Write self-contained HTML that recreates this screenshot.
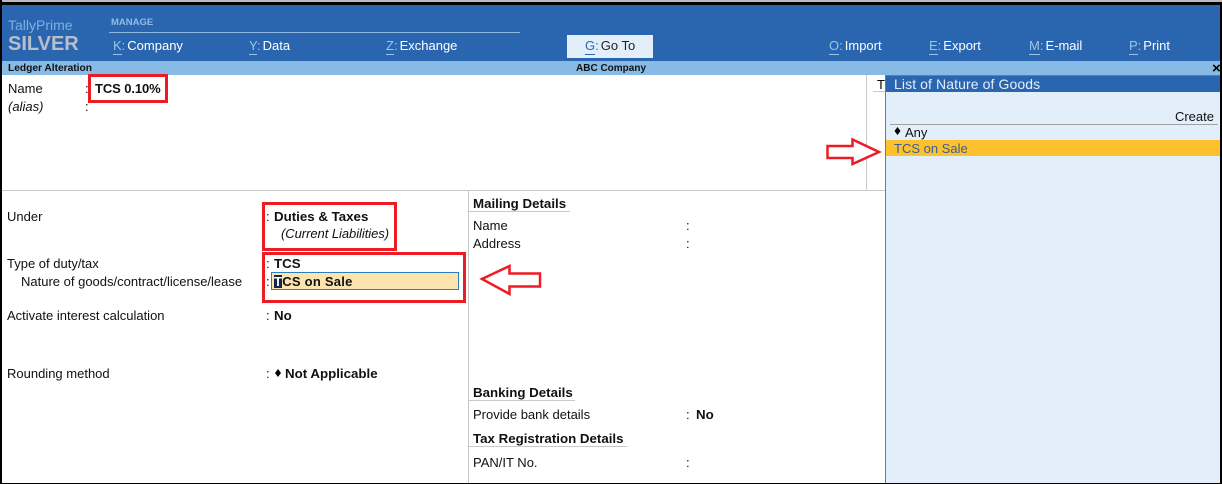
<!DOCTYPE html>
<html>
<head>
<meta charset="utf-8">
<style>
html,body{margin:0;padding:0;background:#fff;}
#p{position:relative;width:1222px;height:484px;overflow:hidden;background:#fff;font-family:"Liberation Sans",sans-serif;font-size:13px;color:#111;}
#p div{position:absolute;white-space:nowrap;}
.t{line-height:14px;height:14px;}
.b{font-weight:bold;font-size:13.3px;}
.m{color:#fff;top:39px;line-height:14px;font-size:13px;}
.m u{color:#9cc4ea;text-decoration:none;border-bottom:1px solid #9cc4ea;padding-bottom:1px;}
.m i{color:#9cc4ea;font-style:normal;margin-right:2px;}
.r{border:3px solid #ed1c24;box-sizing:border-box;}
.l{height:1px;background:#c8c8c8;}
</style>
</head>
<body>
<div id="p">
<div style="left:0;top:0;width:1222px;height:2px;background:#bcbcbc"></div>
<div style="left:0;top:2px;width:1222px;height:3px;background:#000"></div>
<div style="left:2px;top:5px;width:1218px;height:56px;background:#2a66b0"></div>
<div style="left:2px;top:61px;width:1218px;height:14px;background:#87bae4"></div>
<div style="left:0;top:0;width:2px;height:484px;background:#000"></div>
<div style="left:1220px;top:2px;width:2px;height:482px;background:#000"></div>
<div style="left:0;top:483px;width:1222px;height:1px;background:#000"></div>

<div class="t" style="left:8px;top:17px;font-size:14px;color:#7fb0e0;line-height:16px;height:16px">TallyPrime</div>
<div class="t" style="left:8px;top:33px;font-size:20px;font-weight:bold;color:#b9bfc9;line-height:22px;height:22px">SILVER</div>
<div class="t" style="left:111px;top:16px;font-size:9.5px;font-weight:bold;color:#8fbde6">MANAGE</div>
<div style="left:109px;top:32px;width:411px;height:1px;background:#8fb6de"></div>
<div class="m" style="left:113px"><u>K</u><i>:</i>Company</div>
<div class="m" style="left:249px"><u>Y</u><i>:</i>Data</div>
<div class="m" style="left:386px"><u>Z</u><i>:</i>Exchange</div>
<div style="left:567px;top:35px;width:86px;height:23px;background:#e2effb"></div>
<div class="m" style="left:585px;color:#222"><u style="color:#2a66b0;border-color:#2a66b0">G</u><i style="color:#2a66b0">:</i>Go To</div>
<div class="m" style="left:829px"><u>O</u><i>:</i>Import</div>
<div class="m" style="left:929px"><u>E</u><i>:</i>Export</div>
<div class="m" style="left:1029px"><u>M</u><i>:</i>E-mail</div>
<div class="m" style="left:1129px"><u>P</u><i>:</i>Print</div>

<div class="t" style="left:8px;top:62px;font-size:10.2px;font-weight:bold">Ledger Alteration</div>
<div class="t" style="left:576px;top:62px;font-size:10px;font-weight:bold">ABC Company</div>
<div class="t" style="left:1212px;top:62px;font-size:15px;font-weight:bold;color:#000">×</div>

<div class="t" style="left:8px;top:82px">Name</div>
<div class="t" style="left:85px;top:82px">:</div>
<div class="t" style="left:8px;top:100px;font-style:italic">(alias)</div>
<div class="t" style="left:85px;top:100px">:</div>
<div class="r" style="left:88px;top:74px;width:80px;height:29px"></div>
<div class="t b" style="left:95px;top:82px;font-size:13px;letter-spacing:-.1px">TCS 0.10%</div>

<div style="left:866px;top:75px;width:1px;height:115px;background:#c8c8c8"></div>
<div class="l" style="left:873px;top:91px;width:13px"></div>
<div class="t" style="left:877px;top:78px;color:#000;font-size:13px">T</div>
<div class="l" style="left:2px;top:190px;width:884px"></div>
<div style="left:468px;top:191px;width:1px;height:292px;background:#c8c8c8"></div>

<div class="t" style="left:7px;top:210px">Under</div>
<div class="t" style="left:266px;top:210px">:</div>
<div class="t b" style="left:274px;top:210px">Duties &amp; Taxes</div>
<div class="t" style="left:281px;top:227px;font-style:italic;letter-spacing:-.05px">(Current Liabilities)</div>
<div class="r" style="left:262px;top:202px;width:135px;height:49px"></div>

<div class="t" style="left:7px;top:257px">Type of duty/tax</div>
<div class="t" style="left:266px;top:257px">:</div>
<div class="t b" style="left:274px;top:257px">TCS</div>
<div class="t" style="left:21px;top:275px">Nature of goods/contract/license/lease</div>
<div class="t" style="left:266px;top:275px">:</div>
<div style="left:271px;top:272px;width:188px;height:18px;box-sizing:border-box;border:1px solid #2a7fc0;background:#fde3ae"></div>
<div style="left:274px;top:275px;width:8px;height:13px;background:#10264a"></div>
<div class="t b" style="left:274px;top:275px;font-size:13px;letter-spacing:.25px"><span style="color:#fff">T</span>CS on Sale</div>
<div class="r" style="left:262px;top:252px;width:204px;height:51px"></div>

<div class="t" style="left:7px;top:309px">Activate interest calculation</div>
<div class="t" style="left:266px;top:309px">:</div>
<div class="t b" style="left:274px;top:309px">No</div>

<div class="t" style="left:7px;top:367px">Rounding method</div>
<div class="t" style="left:266px;top:367px">:</div>
<div class="t b" style="left:285px;top:367px">Not Applicable</div>

<div class="t b" style="left:473px;top:197px">Mailing Details</div>
<div class="l" style="left:469px;top:211px;width:101px"></div>
<div class="t" style="left:473px;top:219px">Name</div>
<div class="t" style="left:686px;top:219px">:</div>
<div class="t" style="left:473px;top:237px">Address</div>
<div class="t" style="left:686px;top:237px">:</div>

<div class="t b" style="left:473px;top:386px">Banking Details</div>
<div class="l" style="left:469px;top:400px;width:106px"></div>
<div class="t" style="left:473px;top:408px">Provide bank details</div>
<div class="t" style="left:686px;top:408px">:</div>
<div class="t b" style="left:696px;top:408px">No</div>
<div class="t b" style="left:473px;top:432px">Tax Registration Details</div>
<div class="l" style="left:469px;top:446px;width:158px"></div>
<div class="t" style="left:473px;top:456px">PAN/IT No.</div>
<div class="t" style="left:686px;top:456px">:</div>

<div style="left:885px;top:75px;width:335px;height:408px;background:#e2effb;border-left:1px solid #6e7a88;border-top:1px solid #6e7a88;box-sizing:border-box"></div>
<div style="left:886px;top:76px;width:334px;height:16px;background:#2a66b0"></div>
<div class="t" style="left:894px;top:76px;color:#e2effb;font-size:14px;letter-spacing:.1px;line-height:16px;height:16px">List of Nature of Goods</div>
<div class="t" style="right:8px;top:110px">Create</div>
<div style="left:890px;top:124px;width:328px;height:1px;background:#a0a0a0"></div>
<div class="t" style="left:905px;top:126px">Any</div>
<div style="left:886px;top:140px;width:334px;height:16px;background:#fdc12e"></div>
<div class="t" style="left:894px;top:142px;color:#3a5f92">TCS on Sale</div>

<svg style="position:absolute;left:0;top:0" width="1222" height="484">
<path d="M897.5 127L900.5 131L897.5 135L894.5 131Z" fill="#000"/>
<path d="M278 369L281 373L278 377L275 373Z" fill="#000"/>
<path d="M827.5 146H852.5V139.5L879 152L852.5 164V158H827.5Z" fill="#fff" stroke="#ed1c24" stroke-width="2.5"/>
<path d="M540 273.500H509.500V266L482 279L509.500 294V286.500H540Z" fill="#fff" stroke="#ed1c24" stroke-width="2.5"/>
</svg>
</div>
</body>
</html>
